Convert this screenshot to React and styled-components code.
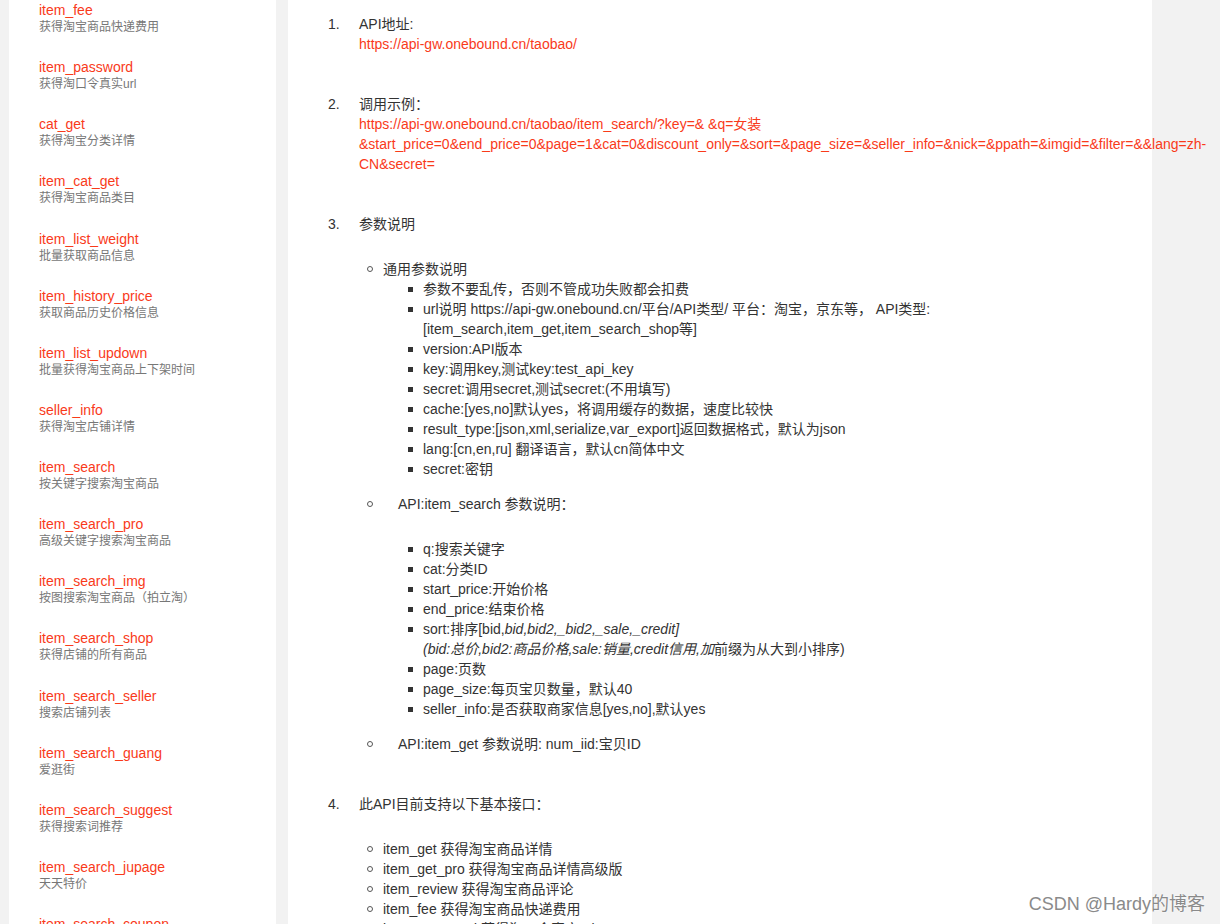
import React from 'react'
import styled, { createGlobalStyle } from 'styled-components'

const GlobalStyle = createGlobalStyle`
  html, body {
    margin: 0;
    padding: 0;
    background: #f2f2f2;
  }
  body {
    font-family: "Liberation Sans", Arial, "Noto Sans CJK SC", sans-serif;
    overflow: hidden;
  }
`

const RED = '#f93a1a'

const Page = styled.div`
  position: relative;
  display: flex;
  gap: 12px;
  padding-left: 9px;
  height: 924px;
  overflow: hidden;
`

//left nav
const Sidebar = styled.aside`
  width: 267px;
  flex-shrink: 0;
  box-sizing: border-box;
  background: #fff;
  padding: 1px 0 0 30px;
  display: flex;
  flex-direction: column;
  gap: 22.13px;
`

const NavItem = styled.a`
  display: flex;
  flex-direction: column;
  text-decoration: none;
`

const NavName = styled.span`
  font-size: 14px;
  line-height: 18px;
  color: ${RED};
`

const NavDesc = styled.span`
  font-size: 12px;
  line-height: 17px;
  color: #777;
`

//article
const Main = styled.main`
  width: 864px;
  flex-shrink: 0;
  box-sizing: border-box;
  background: #fff;
  padding: 13.6px 0 0 40px;
  font-size: 14px;
  line-height: 20px;
  color: #333;
  white-space: nowrap;
`

const Steps = styled.ol`
  list-style: none;
  margin: 0;
  padding: 0;
`

const Step = styled.li`
  display: flex;
  & + & {
    margin-top: 40px;
  }
`

const StepNum = styled.span`
  width: 31px;
  flex-shrink: 0;
`

const StepBody = styled.div`
  min-width: 0;
`

const Link = styled.span`
  display: block;
  color: ${RED};
`

const List = styled.ul`
  list-style: none;
  margin: ${p => p.$top || 0}px 0 0;
  padding: 0;
`

const Item = styled.li`
  margin-top: ${p => p.$gap || 0}px;
`

const Row = styled.div`
  display: flex;
`

const Marker = styled.span`
  width: ${p => p.$w}px;
  flex-shrink: 0;
  display: flex;
  align-items: flex-start;
  box-sizing: border-box;
  padding-left: ${p => p.$x}px;
`

const Circle = styled.span`
  width: 6px;
  height: 6px;
  margin-top: 7px;
  box-sizing: border-box;
  border: 1px solid #555;
  border-radius: 50%;
`

const Square = styled.span`
  width: 5px;
  height: 5px;
  margin-top: 8px;
  background: #333;
`

const Em = styled.em`
  font-style: italic;
`

const Watermark = styled.div`
  position: absolute;
  right: 15px;
  bottom: 10px;
  font-size: 18px;
  line-height: 20px;
  color: #8a8a8a;
  text-shadow: 0 0 2px #fff, 0 0 1px #fff;
  white-space: nowrap;
`

const navList = [
  ['item_fee', '获得淘宝商品快递费用'],
  ['item_password', '获得淘口令真实url'],
  ['cat_get', '获得淘宝分类详情'],
  ['item_cat_get', '获得淘宝商品类目'],
  ['item_list_weight', '批量获取商品信息'],
  ['item_history_price', '获取商品历史价格信息'],
  ['item_list_updown', '批量获得淘宝商品上下架时间'],
  ['seller_info', '获得淘宝店铺详情'],
  ['item_search', '按关键字搜索淘宝商品'],
  ['item_search_pro', '高级关键字搜索淘宝商品'],
  ['item_search_img', '按图搜索淘宝商品（拍立淘）'],
  ['item_search_shop', '获得店铺的所有商品'],
  ['item_search_seller', '搜索店铺列表'],
  ['item_search_guang', '爱逛街'],
  ['item_search_suggest', '获得搜索词推荐'],
  ['item_search_jupage', '天天特价'],
  ['item_search_coupon', '优惠券查询'],
]

const commonParams = [
  '参数不要乱传，否则不管成功失败都会扣费',
  <>url说明 https://api-gw.onebound.cn/平台/API类型/ 平台：淘宝，京东等， API类型:<br />[item_search,item_get,item_search_shop等]</>,
  'version:API版本',
  'key:调用key,测试key:test_api_key',
  'secret:调用secret,测试secret:(不用填写)',
  'cache:[yes,no]默认yes，将调用缓存的数据，速度比较快',
  'result_type:[json,xml,serialize,var_export]返回数据格式，默认为json',
  'lang:[cn,en,ru] 翻译语言，默认cn简体中文',
  'secret:密钥',
]

const searchParams = [
  'q:搜索关键字',
  'cat:分类ID',
  'start_price:开始价格',
  'end_price:结束价格',
  <>sort:排序[bid,<Em>bid,bid2,_bid2,_sale,_credit]<br />(bid:总价,bid2:商品价格,sale:销量,credit信用,加</Em>前缀为从大到小排序)</>,
  'page:页数',
  'page_size:每页宝贝数量，默认40',
  'seller_info:是否获取商家信息[yes,no],默认yes',
]

const apiList = [
  'item_get 获得淘宝商品详情',
  'item_get_pro 获得淘宝商品详情高级版',
  'item_review 获得淘宝商品评论',
  'item_fee 获得淘宝商品快递费用',
  'item_password 获得淘口令真实url',
]

function SquareList({ items, top }) {
  return (
    <List $top={top}>
      {items.map((t, i) => (
        <Item key={i}>
          <Row>
            <Marker $w={64} $x={49}><Square /></Marker>
            <span>{t}</span>
          </Row>
        </Item>
      ))}
    </List>
  )
}

function CircleRow({ wide, children }) {
  return (
    <Row>
      <Marker $w={wide ? 39 : 24} $x={8}><Circle /></Marker>
      <span>{children}</span>
    </Row>
  )
}

function App() {
  return (
    <>
      <GlobalStyle />
      <Page>
        <Sidebar>
          {navList.map(([name, desc]) => (
            <NavItem key={name}>
              <NavName>{name}</NavName>
              <NavDesc>{desc}</NavDesc>
            </NavItem>
          ))}
        </Sidebar>

        <Main>
          <Steps>
            <Step>
              <StepNum>1.</StepNum>
              <StepBody>
                API地址:
                <Link>https://api-gw.onebound.cn/taobao/</Link>
              </StepBody>
            </Step>
            <Step>
              <StepNum>2.</StepNum>
              <StepBody>
                调用示例：
                <Link>https://api-gw.onebound.cn/taobao/item_search/?key=&amp; &amp;q=女装</Link>
                <Link>&amp;start_price=0&amp;end_price=0&amp;page=1&amp;cat=0&amp;discount_only=&amp;sort=&amp;page_size=&amp;seller_info=&amp;nick=&amp;ppath=&amp;imgid=&amp;filter=&amp;&amp;lang=zh-</Link>
                <Link>CN&amp;secret=</Link>
              </StepBody>
            </Step>
            <Step>
              <StepNum>3.</StepNum>
              <StepBody>
                参数说明
                <List $top={25}>
                  <Item>
                    <CircleRow>通用参数说明</CircleRow>
                    <SquareList items={commonParams} />
                  </Item>
                  <Item $gap={15}>
                    <CircleRow wide>API:item_search 参数说明：</CircleRow>
                    <SquareList items={searchParams} top={25} />
                  </Item>
                  <Item $gap={15}>
                    <CircleRow wide>API:item_get 参数说明: num_iid:宝贝ID</CircleRow>
                  </Item>
                </List>
              </StepBody>
            </Step>
            <Step>
              <StepNum>4.</StepNum>
              <StepBody>
                此API目前支持以下基本接口：
                <List $top={25.5}>
                  {apiList.map(t => (
                    <Item key={t}>
                      <CircleRow>{t}</CircleRow>
                    </Item>
                  ))}
                </List>
              </StepBody>
            </Step>
          </Steps>
        </Main>

        <Watermark>CSDN @Hardy的博客</Watermark>
      </Page>
    </>
  )
}

export default App
